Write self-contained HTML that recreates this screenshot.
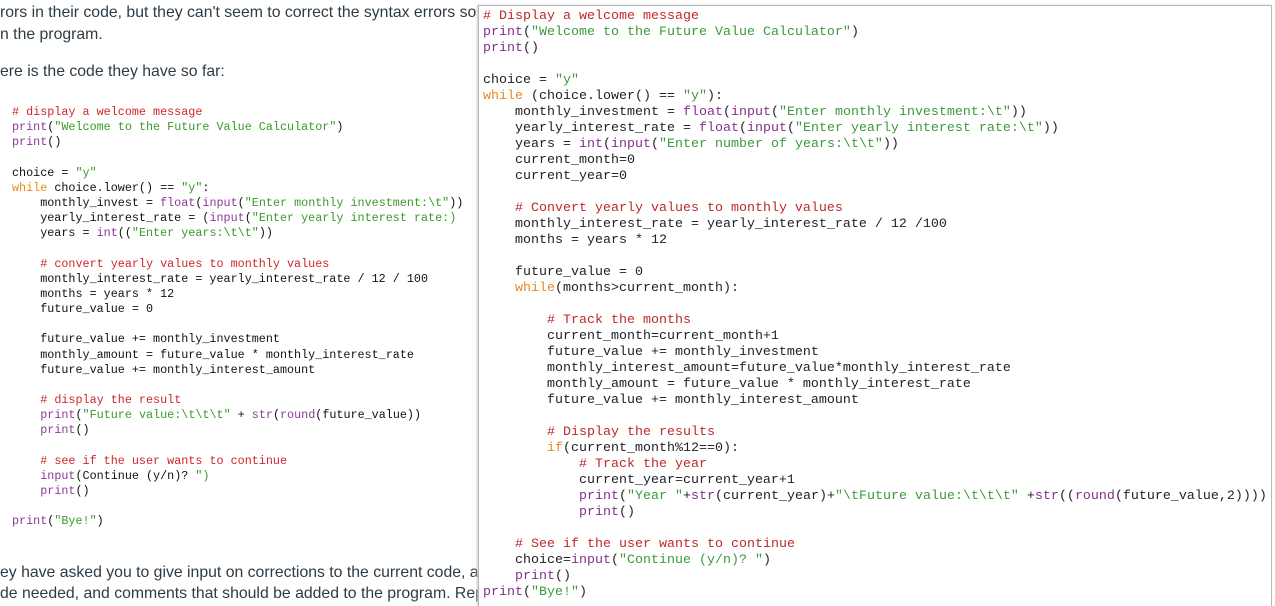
<!DOCTYPE html>
<html><head><meta charset="utf-8"><style>
body{margin:0;width:1275px;height:599px;overflow:hidden;background:#fff;position:relative;font-family:"Liberation Sans",sans-serif;}
.t{position:absolute;left:0;font-size:15.8px;color:#2d3b45;white-space:nowrap;line-height:20px}
pre{margin:0;position:absolute;font-family:"Liberation Mono",monospace;white-space:pre;}
#lc{left:12px;top:105px;font-size:11.75px;line-height:15.15px;color:#111;}
#panel{position:absolute;left:478px;top:5px;width:792px;height:600px;background:#fff;border:1px solid #b8b8b8;border-bottom:none;box-shadow:-1px 0 2px #ccc;}
#rc{left:4px;top:3px;font-size:13.33px;line-height:16px;color:#222;}
.c{color:#c0282b}.s{color:#3c9a3c}.k{color:#86308a}.w{color:#e8891d}
#lc .c{color:#d0262a}#lc .s{color:#3a9a2a}#lc .k{color:#8c3a9a}
</style></head><body>
<div class="t" style="top:3px">rors in their code, but they can't seem to correct the syntax errors so they can't run th</div>
<div class="t" style="top:25px">n the program.</div>
<div class="t" style="top:62px">ere is the code they have so far:</div>
<pre id="lc"><span class="c"># display a welcome message</span>
<span class="k">print</span>(<span class="s">"Welcome to the Future Value Calculator"</span>)
<span class="k">print</span>()

choice = <span class="s">"y"</span>
<span class="w">while</span> choice.lower() == <span class="s">"y"</span>:
    monthly_invest = <span class="k">float</span>(<span class="k">input</span>(<span class="s">"Enter monthly investment:\t"</span>))
    yearly_interest_rate = (<span class="k">input</span>(<span class="s">"Enter yearly interest rate:)</span>
    years = <span class="k">int</span>((<span class="s">"Enter years:\t\t"</span>))

    <span class="c"># convert yearly values to monthly values</span>
    monthly_interest_rate = yearly_interest_rate / 12 / 100
    months = years * 12
    future_value = 0

    future_value += monthly_investment
    monthly_amount = future_value * monthly_interest_rate
    future_value += monthly_interest_amount

    <span class="c"># display the result</span>
    <span class="k">print</span>(<span class="s">"Future value:\t\t\t"</span> + <span class="k">str</span>(<span class="k">round</span>(future_value))
    <span class="k">print</span>()

    <span class="c"># see if the user wants to continue</span>
    <span class="k">input</span>(Continue (y/n)? <span class="s">")</span>
    <span class="k">print</span>()

<span class="k">print</span>(<span class="s">"Bye!"</span>)</pre>
<div class="t" style="top:563px">ey have asked you to give input on corrections to the current code, additional</div>
<div class="t" style="top:584px">de needed, and comments that should be added to the program.  Reply with</div>
<div id="panel"><pre id="rc"><span class="c"># Display a welcome message</span>
<span class="k">print</span>(<span class="s">"Welcome to the Future Value Calculator"</span>)
<span class="k">print</span>()

choice = <span class="s">"y"</span>
<span class="w">while</span> (choice.lower() == <span class="s">"y"</span>):
    monthly_investment = <span class="k">float</span>(<span class="k">input</span>(<span class="s">"Enter monthly investment:\t"</span>))
    yearly_interest_rate = <span class="k">float</span>(<span class="k">input</span>(<span class="s">"Enter yearly interest rate:\t"</span>))
    years = <span class="k">int</span>(<span class="k">input</span>(<span class="s">"Enter number of years:\t\t"</span>))
    current_month=0
    current_year=0

    <span class="c"># Convert yearly values to monthly values</span>
    monthly_interest_rate = yearly_interest_rate / 12 /100
    months = years * 12

    future_value = 0
    <span class="w">while</span>(months&gt;current_month):

        <span class="c"># Track the months</span>
        current_month=current_month+1
        future_value += monthly_investment
        monthly_interest_amount=future_value*monthly_interest_rate
        monthly_amount = future_value * monthly_interest_rate
        future_value += monthly_interest_amount

        <span class="c"># Display the results</span>
        <span class="w">if</span>(current_month%12==0):
            <span class="c"># Track the year</span>
            current_year=current_year+1
            <span class="k">print</span>(<span class="s">"Year "</span>+<span class="k">str</span>(current_year)+<span class="s">"\tFuture value:\t\t\t"</span> +<span class="k">str</span>((<span class="k">round</span>(future_value,2))))
            <span class="k">print</span>()

    <span class="c"># See if the user wants to continue</span>
    choice=<span class="k">input</span>(<span class="s">"Continue (y/n)? "</span>)
    <span class="k">print</span>()
<span class="k">print</span>(<span class="s">"Bye!"</span>)</pre></div>
</body></html>
